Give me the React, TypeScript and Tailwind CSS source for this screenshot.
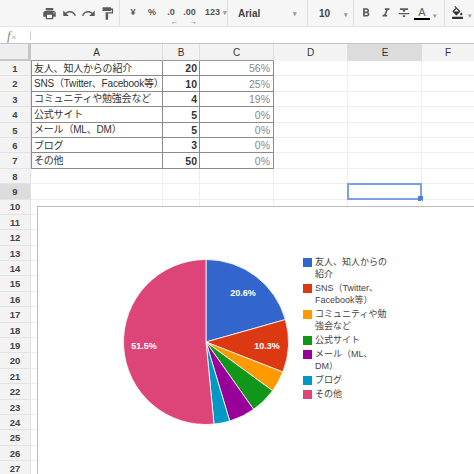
import {
  MdFormatBold,
  MdFormatColorFill,
  MdFormatItalic,
  MdFormatPaint,
  MdFormatStrikethrough,
  MdPrint,
  MdRedo,
  MdUndo,
} from "react-icons/md";

const font = "font-['Liberation_Sans','Noto_Sans_CJK_JP',sans-serif]";

const tableRows = [
  { name: "友人、知人からの紹介", count: 20, rate: "56%" },
  { name: "SNS（Twitter、Facebook等）", count: 10, rate: "25%" },
  { name: "コミュニティや勉強会など", count: 4, rate: "19%" },
  { name: "公式サイト", count: 5, rate: "0%" },
  { name: "メール（ML、DM）", count: 5, rate: "0%" },
  { name: "ブログ", count: 3, rate: "0%" },
  { name: "その他", count: 50, rate: "0%" },
];

const rowNumbers = Array.from({ length: 27 }, (_, i) => i + 1);

const slices = [
  { value: 20, color: "#3366cc" },
  { value: 10, color: "#dc3912" },
  { value: 4, color: "#ff9900" },
  { value: 5, color: "#109618" },
  { value: 5, color: "#990099" },
  { value: 3, color: "#0099c6" },
  { value: 50, color: "#dd4477" },
];

const legend = [
  { color: "#3366cc", lines: ["友人、知人からの", "紹介"] },
  { color: "#dc3912", lines: ["SNS（Twitter、", "Facebook等）"] },
  { color: "#ff9900", lines: ["コミュニティや勉", "強会など"] },
  { color: "#109618", lines: ["公式サイト"] },
  { color: "#990099", lines: ["メール（ML、", "DM）"] },
  { color: "#0099c6", lines: ["ブログ"] },
  { color: "#dd4477", lines: ["その他"] },
];

const Caret = () => <span className="text-[7px] leading-none text-[#999]">▾</span>;

const Divider = () => <div className="h-full w-px bg-[#e0e0e0]" />;

const Toolbar = () => (
  <div className="flex h-[27px] items-center border-b border-[#e4e4e4] bg-[#f6f6f6] text-[#444]">
    <div className="flex h-full w-[119px] items-center pl-[40px] text-[#5c5c5c]">
      <div className="flex w-[19px] justify-center">
        <MdPrint className="h-[15px] w-[15px]" />
      </div>
      <div className="flex w-[20px] justify-center">
        <MdUndo className="h-[15px] w-[15px]" />
      </div>
      <div className="flex w-[19px] justify-center">
        <MdRedo className="h-[15px] w-[15px]" />
      </div>
      <div className="flex w-[19px] justify-center">
        <MdFormatPaint className="h-[15px] w-[15px]" />
      </div>
    </div>
    <Divider />
    <div className="flex h-full w-[107px] items-center text-[9px] font-bold text-[#555]">
      <span className="ml-[9px] w-[8px] text-center">¥</span>
      <span className="ml-[9px] w-[12px] text-center">%</span>
      <span className="relative ml-[7px] w-[12px] text-center">
        .0
        <span className="absolute bottom-[-5px] left-[6px] text-[7px] leading-none">←</span>
      </span>
      <span className="relative ml-[5px] w-[15px] text-center">
        .00
        <span className="absolute bottom-[-5px] left-[8px] text-[7px] leading-none">→</span>
      </span>
      <span className="ml-[8px] w-[15px] text-center">123</span>
      <span className="ml-[3px]">
        <Caret />
      </span>
    </div>
    <Divider />
    <div className="flex h-full w-[79px] items-center justify-between px-[10px] text-[10px] font-bold">
      <span>Arial</span>
      <Caret />
    </div>
    <Divider />
    <div className="flex h-full w-[45px] items-center pl-[11px] text-[10px] font-bold">
      <span className="w-[14px]">10</span>
      <span className="ml-[11px]">
        <Caret />
      </span>
    </div>
    <Divider />
    <div className="flex h-full w-[90px] items-center pl-[3px] text-[#5c5c5c]">
      <div className="flex w-[18px] justify-center">
        <MdFormatBold className="h-[14px] w-[14px]" />
      </div>
      <div className="ml-[2px] flex w-[18px] justify-center">
        <MdFormatItalic className="h-[14px] w-[14px]" />
      </div>
      <div className="flex w-[18px] justify-center">
        <MdFormatStrikethrough className="h-[14px] w-[14px]" />
      </div>
      <div className="ml-[1px] flex w-[16px] flex-col items-center">
        <span className="text-[11px] leading-[12px]">A</span>
        <div className="h-[2px] w-[16px] bg-black" />
      </div>
      <span className="ml-[3px]">
        <Caret />
      </span>
    </div>
    <Divider />
    <div className="flex h-full flex-1 items-center pl-[5px]">
      <div className="flex w-[15px] flex-col items-center">
        <MdFormatColorFill className="h-[13px] w-[13px] text-[#333]" />
        <div className="h-[2px] w-[14px] bg-white" />
      </div>
      <span className="ml-[3px]">
        <Caret />
      </span>
    </div>
  </div>
);

const FormulaBar = () => (
  <div className="flex h-[16px] items-center bg-white">
    <span className="w-[30px] pl-[7px] font-['Liberation_Serif',serif] text-[13px] italic leading-none text-[#888]">
      f<span className="text-[9px]">×</span>
    </span>
    <div className="h-[9px] w-px bg-[#ccc]" />
  </div>
);

const ColumnHeaders = () => (
  <div className="flex h-[18px] border-t border-[#c4c4c4] bg-[#f3f3f3] text-[10px] text-[#333]">
    <div className="w-[31px] border-b-[2px] border-r-[3px] border-[#c6c6c6] bg-[#eeeeee]" />
    <div className="flex w-[132px] items-center justify-center border-b border-r border-b-[#999] border-r-[#dedede]">A</div>
    <div className="flex w-[37px] items-center justify-center border-b border-r border-b-[#999] border-r-[#dedede]">B</div>
    <div className="flex w-[74px] items-center justify-center border-b border-r border-b-[#999] border-r-[#dedede]">C</div>
    <div className="flex w-[74px] items-center justify-center border-r border-[#dedede]">D</div>
    <div className="flex w-[74px] items-center justify-center bg-[#dcdcdc]">E</div>
    <div className="flex flex-1 items-center justify-center">F</div>
  </div>
);

const SheetRow = ({ n }: { n: number }) => {
  const data = tableRows[n - 1];
  const selected = n === 9;
  return (
    <div className="flex h-[15.4px] leading-none text-[#333]">
      <div
        className={`flex w-[31px] items-center justify-center border-b border-r border-[#e2e2e2] pt-px text-[9.5px] font-bold text-[#444] ${
          selected ? "bg-[#dcdcdc]" : "bg-[#f3f3f3]"
        }`}
      >
        {n}
      </div>
      {data ? (
        <>
          <div className="flex w-[132px] items-center whitespace-nowrap border-b border-l border-r border-[#8c8c8c] pl-[2px] pt-px text-[10px] tracking-[-0.2px]">
            {data.name}
          </div>
          <div className="flex w-[37px] items-center justify-end border-b border-r border-[#8c8c8c] pr-[2px] pt-px text-[10.5px] font-bold">
            {data.count}
          </div>
          <div className="flex w-[74px] items-center justify-end border-b border-r border-[#8c8c8c] pr-[3px] pt-px text-[10.5px] text-[#888]">
            {data.rate}
          </div>
        </>
      ) : (
        <>
          <div className="w-[132px] border-b border-r border-[#eeeeee]" />
          <div className="w-[37px] border-b border-r border-[#eeeeee]" />
          <div className="w-[74px] border-b border-r border-[#eeeeee]" />
        </>
      )}
      <div className="w-[74px] border-b border-r border-[#eeeeee]" />
      <div className="relative w-[74px] border-b border-r border-[#eeeeee]">
        {selected && (
          <div className="absolute inset-[-1px] border-2 border-[#7ba0e4]">
            <div className="absolute bottom-[-3px] right-[-3px] h-[5px] w-[5px] bg-[#4d7fd6]" />
          </div>
        )}
      </div>
      <div className="flex-1 border-b border-[#eeeeee]" />
    </div>
  );
};

const PieChart = () => {
  const total = slices.reduce((sum, s) => sum + s.value, 0);
  const cx = 84;
  const cy = 83;
  const r = 82.5;
  let angle = 0;

  return (
    <svg width="168" height="168" viewBox="0 0 168 168" className="mt-[3px] shrink-0">
      {slices.map((s) => {
        const start = angle;
        angle += (s.value / total) * Math.PI * 2;
        const x1 = cx + r * Math.sin(start);
        const y1 = cy - r * Math.cos(start);
        const x2 = cx + r * Math.sin(angle);
        const y2 = cy - r * Math.cos(angle);
        const large = angle - start > Math.PI ? 1 : 0;
        return (
          <path
            key={s.color}
            d={`M${cx} ${cy}L${x1} ${y1}A${r} ${r} 0 ${large} 1 ${x2} ${y2}Z`}
            fill={s.color}
            stroke="#fff"
            strokeWidth="0.8"
          />
        );
      })}
      <text x="121" y="37" textAnchor="middle" fill="#fff" fontSize="9" fontWeight="bold" fontFamily="Liberation Sans">
        20.6%
      </text>
      <text x="145" y="90" textAnchor="middle" fill="#fff" fontSize="9" fontWeight="bold" fontFamily="Liberation Sans">
        10.3%
      </text>
      <text x="22" y="90" textAnchor="middle" fill="#fff" fontSize="9" fontWeight="bold" fontFamily="Liberation Sans">
        51.5%
      </text>
    </svg>
  );
};

const ChartLegend = () => (
  <div className="flex flex-col gap-[2px] text-[9px] leading-[12px] text-[#444]">
    {legend.map((item) => (
      <div key={item.color} className="flex">
        <div
          className="mr-[3px] mt-[2px] h-[9px] w-[9px] shrink-0"
          style={{ backgroundColor: item.color }}
        />
        <div className="whitespace-nowrap">
          {item.lines.map((line) => (
            <div key={line}>{line}</div>
          ))}
        </div>
      </div>
    ))}
  </div>
);

export default function App() {
  return (
    <div className={`relative h-[474px] w-[474px] overflow-hidden bg-white ${font}`}>
      <Toolbar />
      <FormulaBar />
      <ColumnHeaders />
      {rowNumbers.map((n) => (
        <SheetRow key={n} n={n} />
      ))}
      {/* chart floats over the grid */}
      <div className="absolute left-[37px] top-[206px] flex h-[280px] w-[450px] items-start border-l border-t border-[#bdbdbd] bg-white pl-[84px] pt-[49px]">
        <PieChart />
        <div className="ml-[13px]">
          <ChartLegend />
        </div>
      </div>
    </div>
  );
}
